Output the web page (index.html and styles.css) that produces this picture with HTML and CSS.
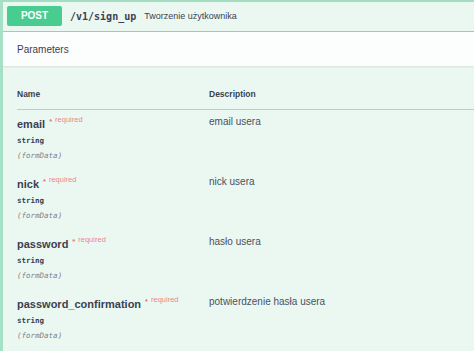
FILE: index.html
```html
<!DOCTYPE html>
<html lang="pl">
<head>
<meta charset="UTF-8">
<meta name="viewport" content="width=device-width, initial-scale=1.0">
<title>POST /v1/sign_up</title>
<link rel="stylesheet" href="styles.css">
</head>
<body>
    <div class="opblock">
        <div class="summary">
            <span class="method">POST</span>
            <span class="path">/v1/sign_up</span>
            <span class="summary-desc">Tworzenie użytkownika</span>
        </div>
        <div class="section-header">
            <h4>Parameters</h4>
        </div>
        <div class="table-container">
            <table class="parameters">
                <thead>
                    <tr>
                        <th class="col-name">Name</th>
                        <th>Description</th>
                    </tr>
                </thead>
                <tbody>
                    <tr>
                        <td class="col-name">
                            <div class="param-name">email<span class="req">*</span><span class="req-label">required</span></div>
                            <div class="param-type">string</div>
                            <div class="param-in">(formData)</div>
                        </td>
                        <td class="col-desc">email usera</td>
                    </tr>
                    <tr>
                        <td class="col-name">
                            <div class="param-name">nick<span class="req">*</span><span class="req-label">required</span></div>
                            <div class="param-type">string</div>
                            <div class="param-in">(formData)</div>
                        </td>
                        <td class="col-desc">nick usera</td>
                    </tr>
                    <tr>
                        <td class="col-name">
                            <div class="param-name">password<span class="req">*</span><span class="req-label">required</span></div>
                            <div class="param-type">string</div>
                            <div class="param-in">(formData)</div>
                        </td>
                        <td class="col-desc">hasło usera</td>
                    </tr>
                    <tr>
                        <td class="col-name">
                            <div class="param-name">password_confirmation<span class="req">*</span><span class="req-label">required</span></div>
                            <div class="param-type">string</div>
                            <div class="param-in">(formData)</div>
                        </td>
                        <td class="col-desc">potwierdzenie hasła usera</td>
                    </tr>
                </tbody>
            </table>
        </div>
    </div>
</body>
</html>
```

FILE: styles.css
```css
body {
    margin: 0;
    padding: 0;
    background: #ffffff;
    font-family: "Liberation Sans", Arial, sans-serif;
    color: #3b4151;
}
.opblock {
    height: 349px;
    border-top: 2px solid #a3dec3;
    border-left: 3px solid #a6e0c6;
    background: #ebf8f2;
    overflow: hidden;
}
.summary {
    display: flex;
    align-items: center;
    height: 20px;
    padding: 4px 5px 5px 4px;
    border-bottom: 1px solid #8fd5b4;
}
.method {
    display: inline-block;
    min-width: 55px;
    height: 20px;
    line-height: 20px;
    text-align: center;
    background: #49cc90;
    color: #ffffff;
    font-weight: bold;
    font-size: 10px;
    border-radius: 2px;
}
.path {
    margin-left: 8px;
    font-family: "DejaVu Sans Mono", monospace;
    font-weight: bold;
    font-size: 10px;
    color: #3b4151;
}
.summary-desc {
    margin-left: 8px;
    font-size: 9px;
    color: #3b4151;
}
.section-header {
    height: 34px;
    display: flex;
    align-items: center;
    padding: 0 14px;
    background: #fbfefd;
    box-shadow: 0 1px 2px rgba(0, 0, 0, 0.1);
}
.section-header h4 {
    margin: 0;
    font-size: 10px;
    font-weight: normal;
}
.table-container {
    padding: 15px 0 0 14px;
}
.parameters {
    width: 100%;
    border-collapse: collapse;
}
.parameters th {
    text-align: left;
    font-size: 8.5px;
    font-weight: bold;
    line-height: 11px;
    padding: 8px 0 9px 0;
    border-bottom: 1px solid #c3cac8;
}
.parameters td {
    vertical-align: top;
    padding: 0;
}
.col-name {
    width: 192px;
}
td.col-name {
    padding: 6px 0 7px 0;
}
td.col-desc {
    padding-top: 5px;
    font-size: 10px;
    line-height: 14px;
    color: #4a5060;
}
.param-name {
    font-size: 11px;
    font-weight: bold;
    line-height: 16px;
    height: 16px;
}
.req {
    color: #f26d6d;
    font-size: 7.5px;
    line-height: 1;
    position: relative;
    top: -4px;
    margin-left: 4px;
}
.req-label {
    color: #f08585;
    font-size: 7.5px;
    font-weight: normal;
    line-height: 1;
    position: relative;
    top: -6px;
    margin-left: 3px;
}
.param-type {
    font-family: "DejaVu Sans Mono", monospace;
    font-size: 7.5px;
    font-weight: bold;
    line-height: 15px;
    margin-top: 1px;
    color: #3b4151;
}
.param-in {
    font-family: "DejaVu Sans Mono", monospace;
    font-size: 7.5px;
    font-style: italic;
    line-height: 15px;
    color: #7d818c;
}
```
